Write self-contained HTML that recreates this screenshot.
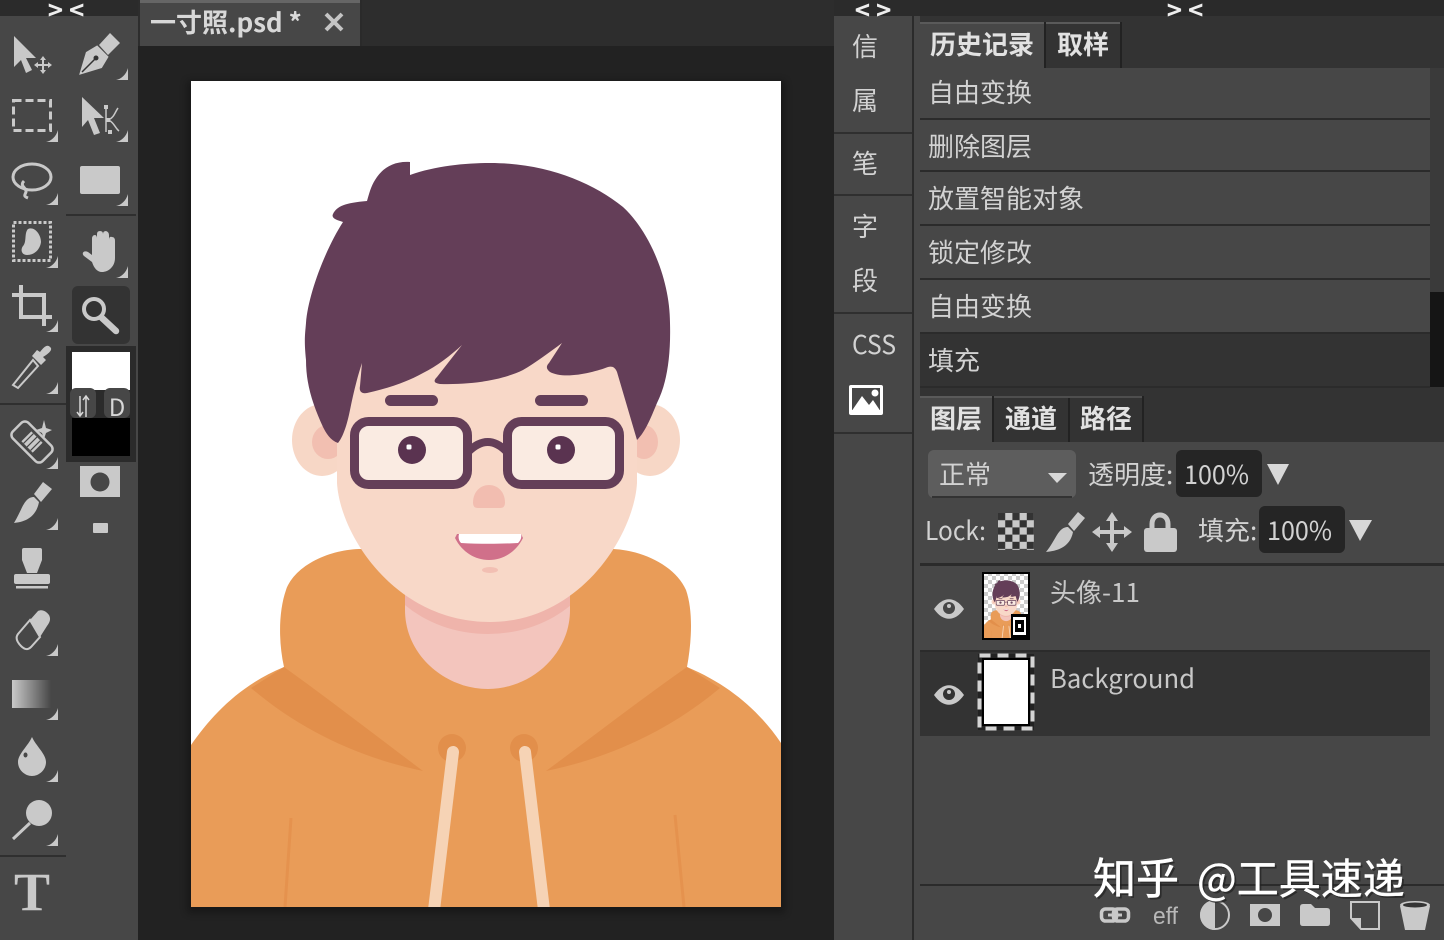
<!DOCTYPE html>
<html><head><meta charset="utf-8"><style>
html,body{margin:0;padding:0;width:1444px;height:940px;overflow:hidden;background:#222}
svg{display:block;position:absolute;left:0;top:0}
text{font-family:"Noto Sans CJK SC","Liberation Sans",sans-serif;fill:#d2d2d2;font-size:26px}
.b{font-weight:700;fill:#e2e2e2}
.ui{fill:#c9c9c9}
</style></head><body>
<svg width="1444" height="940" viewBox="0 0 1444 940" xmlns="http://www.w3.org/2000/svg">
<defs>
<pattern id="ck" width="8" height="8" patternUnits="userSpaceOnUse"><rect width="8" height="8" fill="#fff"/><rect width="4" height="4" fill="#ccc"/><rect x="4" y="4" width="4" height="4" fill="#ccc"/></pattern>
<pattern id="ck2" x="998" y="513" width="14.4" height="14.4" patternUnits="userSpaceOnUse"><rect width="14.4" height="14.4" fill="#c9c9c9"/><rect width="7.2" height="7.2" fill="#333"/><rect x="7.2" y="7.2" width="7.2" height="7.2" fill="#333"/></pattern>
<clipPath id="img"><rect x="191" y="81" width="590" height="826"/></clipPath>
<clipPath id="neck"><path d="M405 585V610C405 655 445 689 488 689C530 689 570 655 570 610V585Z"/></clipPath>
<filter id="sh" x="-5%" y="-5%" width="110%" height="110%"><feGaussianBlur stdDeviation="4"/></filter>
<path id="tri" d="M12 0V12H0C5 11 10 7 12 0Z"/>
<g id="person" clip-path="url(#img)">
 <path fill="#e99c58" d="M284 667C240 685 212 715 191 745V907H781V743C760 712 730 685 687 667C692 640 693 610 686 590C675 565 640 549 610 549H362C330 549 295 565 286 590C279 610 278 640 284 667Z"/>
 <path fill="#e28f4b" d="M284 667L251 688C300 730 360 758 423 771C375 735 330 700 284 667ZM687 667L720 688C670 730 610 758 546 771C595 735 640 700 687 667Z"/>
 <circle cx="452" cy="748" r="14" fill="#e28f4b"/><circle cx="524" cy="748" r="14" fill="#e28f4b"/>
 <path d="M453 752L434 910M525 752L544 910" stroke="#f6d3b5" stroke-width="12" stroke-linecap="round" fill="none"/>
 <path d="M291 818L285 907M675 815L684 907" stroke="#e5924e" stroke-width="3" fill="none"/>
 <path fill="#f3c5bd" d="M405 585V610C405 655 445 689 488 689C530 689 570 655 570 610V585Z"/>
 <ellipse cx="488" cy="530" rx="120" ry="104" fill="#efb4ab" clip-path="url(#neck)"/>
 <ellipse cx="322" cy="440" rx="30" ry="36" fill="#f7d7c6"/><ellipse cx="650" cy="440" rx="30" ry="36" fill="#f7d7c6"/>
 <ellipse cx="328" cy="442" rx="16" ry="17" fill="#f2bfb1"/><ellipse cx="644" cy="442" rx="14" ry="17" fill="#f2bfb1"/>
 <path fill="#f8d8c8" d="M337 300V483C340 535 395 622 490 622C580 622 634 535 637 483V300Z"/>
 <path fill="#643e58" d="M410 162L410 175C435 166 465 163 490 163C545 163 592 182 623 207C650 232 670 280 670 323C671 360 666 385 657 403C650 420 645 432 637 440L617 372C615 367 612 366 608 367C595 372 565 380 550 372C546 369 546 366 549 363L562 343C550 352 535 363 523 370C505 379 475 385 440 384C434 383 433 381 437 377L462 345C450 356 437 366 423 373C405 383 385 389 367 393C361 394 359 391 360 386L362 363C357 378 353 395 350 410C347 425 343 437 338 443C330 440 326 433 323 427C313 405 306 385 306 360C304 340 305 335 306 323C308 295 325 250 343 222C336 220 331 218 333 214C337 206 345 203 367 201C370 190 372 184 377 177C384 167 395 161 410 162Z"/>
 <rect x="385" y="395" width="53" height="11" rx="5.5" fill="#643e58"/><rect x="535" y="395" width="53" height="11" rx="5.5" fill="#643e58"/>
 <rect x="354.500" y="421.500" width="113" height="63" rx="14" fill="#faebe2" stroke="#643e58" stroke-width="9"/>
 <rect x="507.500" y="421.500" width="112" height="63" rx="14" fill="#faebe2" stroke="#643e58" stroke-width="9"/>
 <path d="M468 452Q488 432 507 452" stroke="#643e58" stroke-width="8" fill="none"/>
 <circle cx="412" cy="450" r="14" fill="#5a3350"/><circle cx="561" cy="450" r="14" fill="#5a3350"/>
 <rect x="406.500" y="444.500" width="5" height="5" rx="1.500" fill="#fff"/><rect x="555.500" y="444.500" width="5" height="5" rx="1.500" fill="#fff"/>
 <path fill="#f2bdb0" d="M473 503C473 491 481 485 489 485C497 485 505 491 505 503Q505 508 500 508H478Q473 508 473 503Z"/>
 <path fill="#d0708a" d="M455 538C462 552 475 560 489 560C503 560 516 552 523 538L521 534H457Z"/>
 <path fill="#fff" d="M459 534H521C522 538 520 541 518 543C500 544 478 544 461 543C459 541 458 538 459 534Z"/>
 <ellipse cx="490" cy="570" rx="8" ry="3" fill="#f2bfb3"/>
</g>
</defs>

<!-- base panels -->
<rect width="1444" height="940" fill="#222"/>
<rect width="138" height="940" fill="#474747"/>
<rect width="138" height="16" fill="#2b2b2b"/>
<rect x="138" y="0" width="696" height="46" fill="#2d2d2d"/>
<rect x="834" width="610" height="940" fill="#333"/>
<rect x="834" width="86" height="16" fill="#2b2b2b"/>
<rect x="834" y="16" width="78" height="924" fill="#474747"/>
<rect x="912" width="2" height="940" fill="#2b2b2b"/>
<rect x="914" y="16" width="6" height="924" fill="#474747"/>
<rect x="920" width="524" height="16" fill="#2a2a2a"/>
<rect x="920" y="16" width="524" height="52" fill="#333"/>

<!-- tab -->
<rect x="140" y="0" width="222" height="46" fill="#474747"/>
<rect x="140" y="0" width="222" height="3" fill="#666"/>
<rect x="360" y="0" width="2" height="46" fill="#2a2a2a"/>
<text class="b" x="150" y="32" style="font-size:26px;fill:#d8d8d8">一寸照.psd *</text>
<path d="M326 14L342 30M342 14L326 30" stroke="#c4c4c4" stroke-width="4"/>

<!-- canvas -->
<rect x="187" y="81" width="598" height="832" fill="#000" opacity=".3" filter="url(#sh)"/>
<rect x="191" y="81" width="590" height="826" fill="#fff"/>
<use href="#person"/>

<!-- left toolbar -->
<text x="66" y="20" text-anchor="middle" style="font-size:26px;font-weight:700;fill:#eee">&gt; &lt;</text>
<rect x="66" y="214" width="70" height="2" fill="#2f2f2f"/>
<rect x="0" y="403" width="66" height="2" fill="#2f2f2f"/>
<rect x="0" y="855" width="66" height="2" fill="#2f2f2f"/>
<g class="ui" fill="#c9c9c9">
 <use href="#tri" x="46" y="130"/><use href="#tri" x="46" y="193"/><use href="#tri" x="46" y="256"/><use href="#tri" x="46" y="320"/><use href="#tri" x="46" y="382"/><use href="#tri" x="46" y="457"/><use href="#tri" x="46" y="518"/><use href="#tri" x="46" y="644"/><use href="#tri" x="46" y="708"/><use href="#tri" x="46" y="770"/><use href="#tri" x="46" y="834"/>
 <use href="#tri" x="116" y="68"/><use href="#tri" x="116" y="130"/><use href="#tri" x="116" y="194"/><use href="#tri" x="116" y="266"/>
 <!-- move -->
 <path d="M14 36L36 58H26L32 70L26 73L21 60L14 67Z"/>
 <path d="M43 56L46 60H44V64H48V62L52 65L48 68V66H44V70H46L43 74L40 70H42V66H38V68L34 65L38 62V64H42V60H40Z"/>
 <!-- pen -->
 <path d="M81 73L87 53L97 47L107 57L101 67Z" fill="none" stroke="#c9c9c9" stroke-width="2.500"/>
 <path d="M81 73L87 53L97 47L107 57L101 67ZM81 73L95 58"/>
 <circle cx="96" cy="58" r="2.500" fill="#333"/><path d="M82 72L95 59" stroke="#333" stroke-width="1.500"/>
 <path d="M99 45L110 33L120 43L108 55Z"/>
 <!-- marquee -->
 <rect x="13.500" y="100.500" width="37" height="30" fill="none" stroke="#c9c9c9" stroke-width="3" stroke-dasharray="8 4"/>
 <!-- path select -->
 <path d="M82 97L104 118H94L100 133L94 135L88 120L82 127Z"/>
 <path d="M106 107V132M108 120C114 118 115 112 118 108M108 120C114 122 115 128 119 131" stroke="#c9c9c9" stroke-width="1.500" fill="none"/>
 <rect x="104" y="105" width="4" height="4"/><rect x="106" y="118" width="4" height="4"/><rect x="108" y="130" width="4" height="4"/>
 <!-- lasso -->
 <ellipse cx="32" cy="177" rx="19" ry="13" fill="none" stroke="#c9c9c9" stroke-width="3"/>
 <path d="M24 181C19 186 27 188 26 192C25 195 23 196 28 198" fill="none" stroke="#c9c9c9" stroke-width="3"/>
 <!-- rect -->
 <rect x="80" y="166" width="40" height="28" rx="2"/>
 <!-- quick select -->
 <rect x="13.500" y="222.500" width="37" height="38" fill="none" stroke="#c9c9c9" stroke-width="3" stroke-dasharray="3 2"/>
 <path d="M28 229C34 226 41 234 41 242C40 250 34 255 27 255C22 255 20 250 23 246C27 242 24 233 28 229Z"/>
 <!-- hand -->
 <path d="M92 262L84 256C81 253 84 250 88 252L92 255V239Q92 235 95 235Q97 235 97 239V234Q97 231 100 231Q103 231 103 234V234Q103 231 106 231Q109 232 109 235V240Q109 236 112 237Q115 237 115 241V258C115 267 108 272 102 272C97 272 94 268 92 262Z"/>
 <!-- crop -->
 <path d="M12 295H44V326M21 285V317H52" fill="none" stroke="#c9c9c9" stroke-width="4"/>
 <!-- zoom -->
 <rect x="72" y="286" width="58" height="58" rx="6" fill="#333"/>
 <circle cx="94" cy="309" r="10" fill="none" stroke="#c9c9c9" stroke-width="4"/>
 <path d="M102 318L116 331" stroke="#c9c9c9" stroke-width="6.500" stroke-linecap="round"/>
 <!-- eyedropper -->
 <path d="M13 385L33 360L38 366L18 388Z" fill="none" stroke="#c9c9c9" stroke-width="2"/>
 <path d="M32 356L41 365L46 360L43 357C50 353 53 349 50 347C47 344 44 347 40 352L37 350Z"/>
 <!-- swatches -->
 <rect x="66" y="346" width="70" height="116" fill="#2b2b2b"/>
 <rect x="72" y="352" width="58" height="38" fill="#fff"/>
 <rect x="72" y="418" width="58" height="38" fill="#000"/>
 <rect x="70" y="388" width="26" height="30" rx="6" fill="#474747"/>
 <rect x="104" y="388" width="26" height="30" rx="6" fill="#474747"/>
 <path d="M80 396V415M77 412L80 416L83 412M86 417V397M83 400L86 396L89 400" fill="none" stroke="#d8d8d8" stroke-width="1.500"/>
 <text x="117" y="416" text-anchor="middle" style="font-size:24px;fill:#d8d8d8">D</text>
 <!-- healing -->
 <g transform="translate(32 442) rotate(45)">
  <rect x="-21" y="-11" width="42" height="22" rx="5" fill="none" stroke="#c9c9c9" stroke-width="2.500"/>
  <rect x="-8" y="-7" width="16" height="14" fill="#c9c9c9"/>
  <path d="M-5 -7V7M0 -7V7M5 -7V7" stroke="#474747" stroke-width="1.200"/>
 </g>
 <path d="M44 420L46 428L52 430L46 433L44 439L42 433L36 430L42 428Z"/>
 <!-- brush -->
 <path d="M14 523C24 522 36 518 39 502L34 497C24 497 22 510 14 523Z"/>
 <path d="M34 494L43 482L52 489L41 502Z"/>
 <!-- stamp -->
 <path d="M24 548H40Q42 548 42 550V560L37 573H27L22 560V550Q22 548 24 548Z"/>
 <rect x="14" y="574" width="36" height="10" rx="2"/><rect x="16" y="586" width="32" height="2.500"/>
 <!-- eraser -->
 <path d="M30 620L38 611C42 609 46 611 49 615C51 619 50 622 47 626L40 637Z"/>
 <path d="M30 620L18 634C15 638 17 642 21 646C25 650 28 650 31 647L40 637Z" fill="none" stroke="#c9c9c9" stroke-width="2"/>
 <!-- gradient -->
 <linearGradient id="gr"><stop offset="0" stop-color="#c9c9c9"/><stop offset="1" stop-color="#474747"/></linearGradient>
 <rect x="12" y="680" width="39" height="28" fill="url(#gr)"/>
 <!-- drop -->
 <path d="M32 737C36 746 46 754 46 762C46 770 39 776 32 776C25 776 18 770 18 762C18 754 28 746 32 737Z"/>
 <ellipse cx="25.500" cy="755" rx="2" ry="2.500" fill="#474747"/>
 <!-- sponge -->
 <circle cx="39" cy="813" r="13"/>
 <path d="M30 823L13 839" stroke="#c9c9c9" stroke-width="3"/>
 <text x="32" y="910" text-anchor="middle" style="font-family:'Liberation Serif',serif;font-weight:700;font-size:54px;fill:#c9c9c9">T</text>
 <!-- mask -->
 <rect x="80" y="466" width="40" height="31"/><circle cx="100" cy="482" r="9.500" fill="#474747"/>
 <rect x="93" y="523" width="15" height="10" rx="1"/>
</g>

<!-- mid column -->
<text x="873" y="20" text-anchor="middle" style="font-size:26px;font-weight:700;fill:#eee">&lt; &gt;</text>
<g fill="#2f2f2f"><rect x="834" y="132" width="78" height="2"/><rect x="834" y="194" width="78" height="2"/><rect x="834" y="312" width="78" height="2"/><rect x="834" y="432" width="78" height="2"/></g>
<g style="font-size:26px"><text x="852" y="56">信</text><text x="852" y="110">属</text><text x="852" y="173">笔</text><text x="852" y="236">字</text><text x="852" y="290">段</text><text x="852" y="354" textLength="44" lengthAdjust="spacingAndGlyphs">CSS</text></g>
<rect x="849" y="385" width="34" height="30" rx="2" fill="#fff"/>
<rect x="852" y="388" width="28" height="22" fill="#474747"/>
<path d="M851 412L862 396L869 405L873 400L881 412Z" fill="#fff"/><circle cx="875" cy="393" r="3.500" fill="#fff"/>

<!-- right top -->
<text x="1185" y="20" text-anchor="middle" style="font-size:26px;font-weight:700;fill:#eee">&gt; &lt;</text>
<rect x="920" y="22" width="124" height="46" fill="#474747"/><rect x="920" y="22" width="124" height="2" fill="#5a5a5a"/>
<rect x="1044" y="22" width="2" height="46" fill="#222"/>
<rect x="1046" y="22" width="75" height="46" fill="#333"/><rect x="1046" y="22" width="75" height="2" fill="#5a5a5a"/><rect x="1120" y="22" width="2" height="46" fill="#222"/>
<text class="b" x="930" y="54">历史记录</text><text class="b" x="1057" y="54">取样</text>
<rect x="920" y="68" width="510" height="319" fill="#474747"/>
<rect x="920" y="333" width="510" height="54" fill="#333"/>
<g fill="#2b2b2b"><rect x="920" y="118" width="510" height="2"/><rect x="920" y="170" width="510" height="2"/><rect x="920" y="224" width="510" height="2"/><rect x="920" y="278" width="510" height="2"/><rect x="920" y="332" width="510" height="2"/><rect x="920" y="386" width="510" height="2"/></g>
<rect x="1430" y="68" width="14" height="224" fill="#3a3a3a"/>
<rect x="1430" y="292" width="14" height="95" fill="#151515"/>
<g><text x="928" y="102">自由变换</text><text x="928" y="156">删除图层</text><text x="928" y="208">放置智能对象</text><text x="928" y="262">锁定修改</text><text x="928" y="316">自由变换</text><text x="928" y="370">填充</text></g>

<!-- layer tabs -->
<rect x="920" y="396" width="72" height="46" fill="#474747"/><rect x="920" y="396" width="72" height="2" fill="#5a5a5a"/>
<rect x="992" y="396" width="2" height="46" fill="#222"/><rect x="1068" y="396" width="2" height="46" fill="#222"/><rect x="1142" y="396" width="2" height="46" fill="#222"/>
<rect x="994" y="396" width="148" height="2" fill="#4e4e4e"/>
<text class="b" x="930" y="428">图层</text><text class="b" x="1005" y="428">通道</text><text class="b" x="1080" y="428">路径</text>
<rect x="920" y="442" width="524" height="498" fill="#474747"/>

<rect x="928" y="450" width="148" height="48" rx="6" fill="#5d5d5d"/><rect x="932" y="496" width="140" height="2" fill="#333"/>
<text x="939" y="484">正常</text><path d="M1048 473H1067L1057 483Z" fill="#d8d8d8"/>
<text x="1088" y="484">透明度:</text>
<rect x="1176" y="450" width="86" height="47" rx="6" fill="#252525"/>
<text x="1184" y="484" textLength="65" lengthAdjust="spacingAndGlyphs">100%</text>
<path d="M1267 464H1289L1278 485Z" fill="#d8d8d8"/>
<text x="925" y="540" textLength="61" lengthAdjust="spacingAndGlyphs">Lock:</text>
<rect x="998" y="513" width="36" height="37" fill="url(#ck2)"/>
<g fill="#c9c9c9">
 <path d="M1046 552C1056 551 1070 548 1073 532L1068 527C1058 527 1056 540 1046 552Z"/><path d="M1068 524L1078 512L1085 518L1074 531Z"/>
 <path d="M1112 512L1118 521H1114V530H1124V526L1132 532L1124 538V534H1114V543H1118L1112 552L1106 543H1110V534H1100V538L1092 532L1100 526V530H1110V521H1106Z"/>
 <path d="M1152 530V524C1152 512 1168 512 1168 524V530" fill="none" stroke="#c9c9c9" stroke-width="5"/>
 <rect x="1144" y="528" width="33" height="24" rx="3"/>
</g>
<text x="1198" y="540">填充:</text>
<rect x="1259" y="506" width="86" height="47" rx="6" fill="#252525"/>
<text x="1267" y="540" textLength="65" lengthAdjust="spacingAndGlyphs">100%</text>
<path d="M1349 520H1372L1360 541Z" fill="#d8d8d8"/>

<!-- layers -->
<rect x="920" y="563" width="524" height="3" fill="#2b2b2b"/>
<rect x="920" y="650" width="510" height="2" fill="#2b2b2b"/>
<rect x="920" y="652" width="510" height="84" fill="#333"/>
<g id="eye"><path d="M934 609C943 596 955 596 964 609C955 622 943 622 934 609Z" fill="#c9c9c9"/><circle cx="949" cy="608" r="6" fill="#474747"/><circle cx="949" cy="606" r="2" fill="#c9c9c9"/></g>
<path d="M934 695C943 682 955 682 964 695C955 708 943 708 934 695Z" fill="#c9c9c9"/><circle cx="949" cy="694" r="6" fill="#333"/><circle cx="949" cy="692" r="2" fill="#c9c9c9"/>
<rect x="983" y="573" width="46" height="66" fill="url(#ck)" stroke="#000" stroke-width="2"/>
<svg x="984" y="574" width="44" height="64" viewBox="191 81 590 826" preserveAspectRatio="none"><use href="#person"/></svg>
<rect x="1011" y="614" width="17" height="24" fill="#000"/><rect x="1013" y="617" width="13" height="18" fill="#fff"/><rect x="1015" y="620" width="9" height="12" fill="#000"/><rect x="1018" y="624" width="3" height="4" fill="#fff"/>
<text x="1050" y="602" style="fill:#c8c8c8">头像-11</text>
<rect x="978" y="654" width="56" height="76" fill="#222"/>
<rect x="979.500" y="655.500" width="53" height="73" fill="none" stroke="#d4d4d4" stroke-width="4" stroke-dasharray="11 7"/>
<rect x="983" y="659" width="46" height="66" fill="#fff" stroke="#000" stroke-width="2"/>
<text x="1050" y="688" textLength="145" lengthAdjust="spacingAndGlyphs" style="fill:#c8c8c8">Background</text>

<!-- bottom bar -->
<rect x="920" y="884" width="524" height="2" fill="#2b2b2b"/>
<g fill="#c9c9c9">
 <rect x="1101.500" y="909" width="15" height="12" rx="4" fill="none" stroke="#c9c9c9" stroke-width="3.500"/>
 <rect x="1113.500" y="909" width="15" height="12" rx="4" fill="none" stroke="#c9c9c9" stroke-width="3.500"/>
 <rect x="1108" y="913.500" width="14" height="3"/>
 <text x="1153" y="924" textLength="25" lengthAdjust="spacingAndGlyphs" style="font-family:'Liberation Sans',sans-serif;font-size:24px;fill:#b8b8b8">eff</text>
 <circle cx="1215" cy="915" r="14" fill="none" stroke="#c9c9c9" stroke-width="2"/><path d="M1215 900A15 15 0 0 0 1215 930Z"/>
 <rect x="1250" y="904" width="30" height="22"/><circle cx="1265" cy="915" r="7" fill="#474747"/>
 <path d="M1300 907Q1300 904 1303 904H1311L1315 908H1327Q1330 908 1330 911V923Q1330 926 1327 926H1303Q1300 926 1300 923Z"/>
 <path d="M1351 902H1379V929H1361L1351 918Z" fill="none" stroke="#c9c9c9" stroke-width="2"/><path d="M1351 918H1361V929Z"/>
 <path d="M1400 906H1430L1425 930H1405Z"/><ellipse cx="1415" cy="905" rx="15" ry="4"/><ellipse cx="1415" cy="905" rx="12" ry="2.500" fill="#333"/>
</g>

<!-- watermark -->
<g style="font-size:43px;font-family:'Noto Sans CJK SC',sans-serif">
<text x="1095" y="896" style="font-size:43px;fill:#222;opacity:.7">知乎</text>
<text x="1093" y="894" style="font-size:43px;fill:#fff;stroke:#fff;stroke-width:.6px">知乎</text>
<text x="1199" y="896" style="font-size:42px;fill:#222;opacity:.7">@工具速递</text>
<text x="1197" y="894" style="font-size:42px;fill:#fff;stroke:#fff;stroke-width:.4px">@工具速递</text>
</g>
</svg>
</body></html>
